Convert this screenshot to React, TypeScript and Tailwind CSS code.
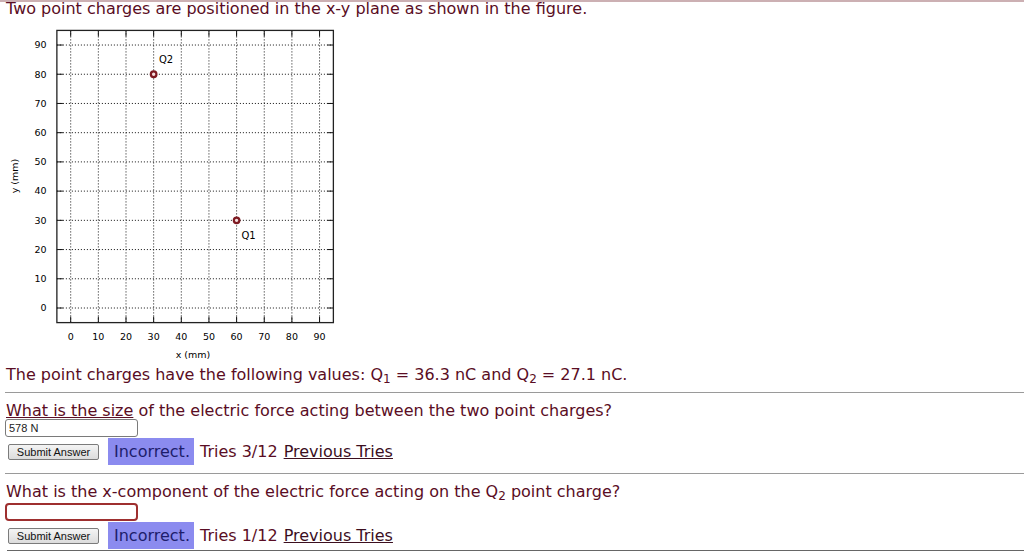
import React from "react";

const X = (v: number) => 70.7 + v * 2.765;
const Y = (v: number) => 279 - v * 2.922;
const ticks = [0, 10, 20, 30, 40, 50, 60, 70, 80, 90];

const Plot = () => {
  const left = X(-5);
  const right = X(95);
  const top = Y(95);
  const bottom = Y(-5);
  return (
    <svg width={345} height={333} className="block" style={{ fontFamily: "'DejaVu Sans', sans-serif" }}>
      {ticks.map((t) => (
        <g key={t}>
          <line x1={X(t)} y1={top} x2={X(t)} y2={bottom} stroke="#111" strokeWidth={1} strokeDasharray="1 2" />
          <line x1={left} y1={Y(t)} x2={right} y2={Y(t)} stroke="#111" strokeWidth={1} strokeDasharray="1 2" />
          <line x1={X(t)} y1={top} x2={X(t)} y2={top + 6} stroke="#111" />
          <line x1={X(t)} y1={bottom} x2={X(t)} y2={bottom - 6} stroke="#111" />
          <line x1={left} y1={Y(t)} x2={left + 6} y2={Y(t)} stroke="#111" />
          <line x1={right} y1={Y(t)} x2={right - 6} y2={Y(t)} stroke="#111" />
          <text x={46.5} y={Y(t) + 3.3} fontSize={9.5} textAnchor="end" fill="#000">
            {t}
          </text>
          <text x={X(t)} y={311} fontSize={9.5} textAnchor="middle" fill="#000">
            {t}
          </text>
        </g>
      ))}
      <rect x={left} y={top} width={right - left} height={bottom - top} fill="none" stroke="#222" strokeWidth={1.3} />
      <text x={193} y={329} fontSize={9.5} textAnchor="middle" fill="#000">
        x (mm)
      </text>
      <text x={18} y={147} fontSize={9.5} textAnchor="middle" fill="#000" transform="rotate(-90 18 147)">
        y (mm)
      </text>
      <circle cx={X(30)} cy={Y(80)} r={2.8} fill="#f4dede" stroke="#7e1a22" strokeWidth={2.2} />
      <circle cx={X(60)} cy={Y(30)} r={2.8} fill="#f4dede" stroke="#7e1a22" strokeWidth={2.2} />
      <text x={159} y={34} fontSize={10} fill="#000">
        Q2
      </text>
      <text x={241.5} y={210} fontSize={10} fill="#000">
        Q1
      </text>
    </svg>
  );
};

const Row = ({ tries }: { tries: string }) => (
  <div className="mt-px flex items-center h-[27px] text-[16px] leading-[18px]">
    <button className="ml-[8px] w-[91px] h-[16px] border border-[#7b7b7b] rounded-[2px] bg-gradient-to-b from-[#f4f4f4] to-[#dcdcdc] text-[11px] leading-[14px] text-[#111] font-['Liberation_Sans',sans-serif]">
      Submit Answer
    </button>
    <span className="ml-[9px] h-[27px] flex items-center pl-[6px] pr-[4px] bg-[#8b8bef] text-[#1d1d6b]">
      Incorrect.
    </span>
    <span className="ml-[6px] text-[#5a0d24]">Tries {tries}</span>
    <span className="ml-[6px] underline text-[#3c0f1f]">Previous Tries</span>
  </div>
);

export default function App() {
  return (
    <div className="w-[1024px] h-[553px] overflow-hidden bg-white border-t-2 border-[#ccb0b3] font-['DejaVu_Sans',sans-serif] text-[#5a0d24]">
      <div className="pl-[6px] text-[16px] leading-[14px]">
        Two point charges are positioned in the x-y plane as shown in the figure.
      </div>
      <div className="mt-[13px]">
        <Plot />
      </div>
      <div className="mt-[4px] pl-[6px] text-[16px] leading-[18px]">
        The point charges have the following values: Q<sub>1</sub> = 36.3 nC and Q<sub>2</sub> = 27.1 nC.
      </div>
      <div className="mt-[8px] ml-[5px] h-px bg-[#9a9a9a]" />
      <div className="mt-[10px] pl-[6px] text-[16px] leading-[16px]">
        <span className="underline">What is the size</span> of the electric force acting between the two point charges?
      </div>
      <input
        readOnly
        value="578 N"
        className="block ml-[5px] w-[133px] h-[18px] px-[3px] border border-[#7a7a7a] rounded-[3px] text-[11px] text-[#222] font-['Liberation_Sans',sans-serif] outline-none"
      />
      <Row tries="3/12" />
      <div className="mt-[8px] ml-[5px] h-px bg-[#9a9a9a]" />
      <div className="mt-[10px] pl-[6px] text-[16px] leading-[16px]">
        What is the x-component of the electric force acting on the Q<sub>2</sub> point charge?
      </div>
      <input
        readOnly
        value=""
        className="block mt-[3px] ml-[5px] w-[133px] h-[18px] border-2 border-[#9e2f2f] rounded-[4px] outline-none"
      />
      <Row tries="1/12" />
      <div className="mt-px ml-[7px] h-px bg-[#666]" />
    </div>
  );
}
